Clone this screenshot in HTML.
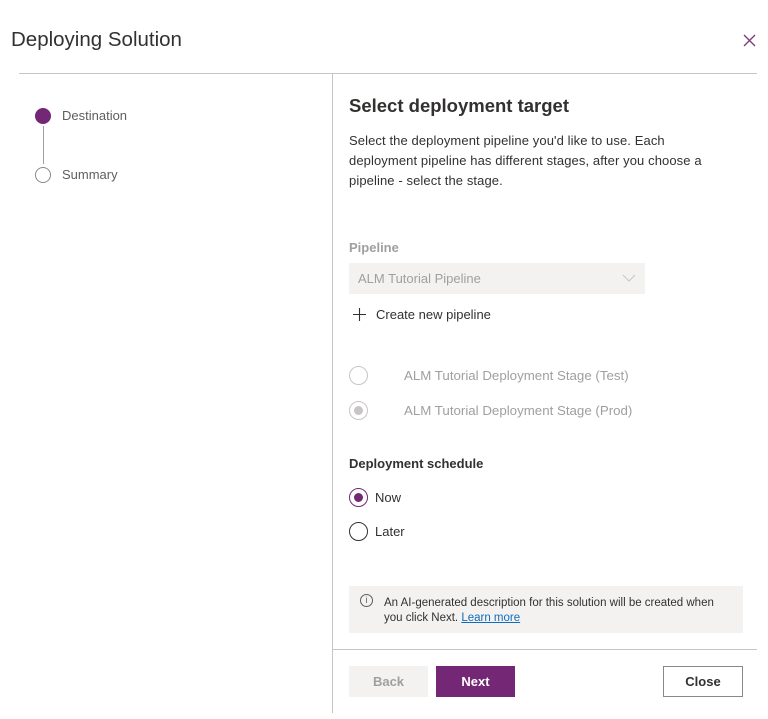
<!DOCTYPE html>
<html><head><style>
body{margin:0;width:768px;height:719px;background:#fff;font-family:"Liberation Sans",sans-serif;color:#323130;position:relative;overflow:hidden}
.a{position:absolute;white-space:nowrap}
.rad{position:absolute;width:16px;height:16px;border-radius:50%;box-sizing:border-box}
</style></head><body>
<div class="a" style="left:11px;top:28px;font-size:20.5px;color:#323130">Deploying Solution</div>
<svg class="a" style="left:743px;top:34px" width="13" height="13"><path d="M1 1 L12 12 M12 1 L1 12" stroke="#7a3a7a" stroke-width="1.3"/></svg>
<div class="a" style="left:19px;top:73px;width:738px;height:1px;background:#c8c6c4"></div>
<div class="a" style="left:332px;top:73px;width:1px;height:640px;background:#c8c6c4"></div>
<div class="a" style="left:332px;top:649px;width:425px;height:1px;background:#c8c6c4"></div>

<div class="rad" style="left:35px;top:108px;background:#742774"></div>
<div class="a" style="left:43px;top:126px;width:1px;height:38px;background:#a19f9d"></div>
<div class="rad" style="left:35px;top:167px;border:1.5px solid #8a8886"></div>
<div class="a" style="left:62px;top:108px;font-size:13px;color:#605e5c">Destination</div>
<div class="a" style="left:62px;top:167px;font-size:13px;color:#605e5c">Summary</div>

<div class="a" style="left:349px;top:95px;font-size:18.5px;font-weight:bold;color:#323130">Select deployment target</div>
<div class="a" style="left:349px;top:131px;font-size:13px;line-height:20px;letter-spacing:0.1px">Select the deployment pipeline you'd like to use. Each<br>deployment pipeline has different stages, after you choose a<br>pipeline - select the stage.</div>
<div class="a" style="left:349px;top:240px;font-size:13px;font-weight:bold;color:#a19f9d">Pipeline</div>
<div class="a" style="left:349px;top:263px;width:296px;height:31px;background:#f3f2f1"></div>
<div class="a" style="left:358px;top:271px;font-size:13px;color:#a19f9d">ALM Tutorial Pipeline</div>
<svg class="a" style="left:622px;top:273px" width="14" height="10"><path d="M1 2 L7 8 L13 2" stroke="#c8c6c4" fill="none"/></svg>
<svg class="a" style="left:352px;top:307px" width="15" height="15"><path d="M7.5 1 V14 M1 7.5 H14" stroke="#323130" stroke-width="1.1"/></svg>
<div class="a" style="left:376px;top:307px;font-size:13px">Create new pipeline</div>
<div class="rad" style="left:349px;top:366px;width:19px;height:19px;border:1px solid #c8c6c4"></div>
<div class="a" style="left:404px;top:368px;font-size:13.3px;color:#a19f9d">ALM Tutorial Deployment Stage (Test)</div>
<div class="rad" style="left:349px;top:401px;width:19px;height:19px;border:1px solid #c8c6c4"></div>
<div class="rad" style="left:354px;top:406px;width:9px;height:9px;background:#c8c6c4"></div>
<div class="a" style="left:404px;top:403px;font-size:13.3px;color:#a19f9d">ALM Tutorial Deployment Stage (Prod)</div>

<div class="a" style="left:349px;top:456px;font-size:13px;font-weight:bold">Deployment schedule</div>
<div class="rad" style="left:349px;top:488px;width:19px;height:19px;border:1px solid #742774"></div>
<div class="rad" style="left:354px;top:493px;width:9px;height:9px;background:#742774"></div>
<div class="a" style="left:375px;top:490px;font-size:13px">Now</div>
<div class="rad" style="left:349px;top:522px;width:19px;height:19px;border:1px solid #323130"></div>
<div class="a" style="left:375px;top:524px;font-size:13px">Later</div>

<div class="a" style="left:349px;top:586px;width:394px;height:47px;background:#f3f2f1"></div>
<div class="rad" style="left:360px;top:594px;width:13px;height:13px;border:1px solid #605e5c;font-size:9px;text-align:center;line-height:11px;color:#605e5c">i</div>
<div class="a" style="left:384px;top:596px;font-size:11.5px;line-height:15px">An AI-generated description for this solution will be created when<br>you click Next. <span style="color:#0f6cbd;text-decoration:underline">Learn more</span></div>

<div class="a" style="left:349px;top:666px;width:79px;height:31px;background:#f3f2f1;color:#a19f9d;font-size:13px;font-weight:bold;text-align:center;line-height:31px">Back</div>
<div class="a" style="left:436px;top:666px;width:79px;height:31px;background:#742774;color:#fff;font-size:13px;font-weight:bold;text-align:center;line-height:31px">Next</div>
<div class="a" style="left:663px;top:666px;width:78px;height:29px;border:1px solid #8a8886;color:#323130;font-size:13px;font-weight:bold;text-align:center;line-height:29px">Close</div>
</body></html>
